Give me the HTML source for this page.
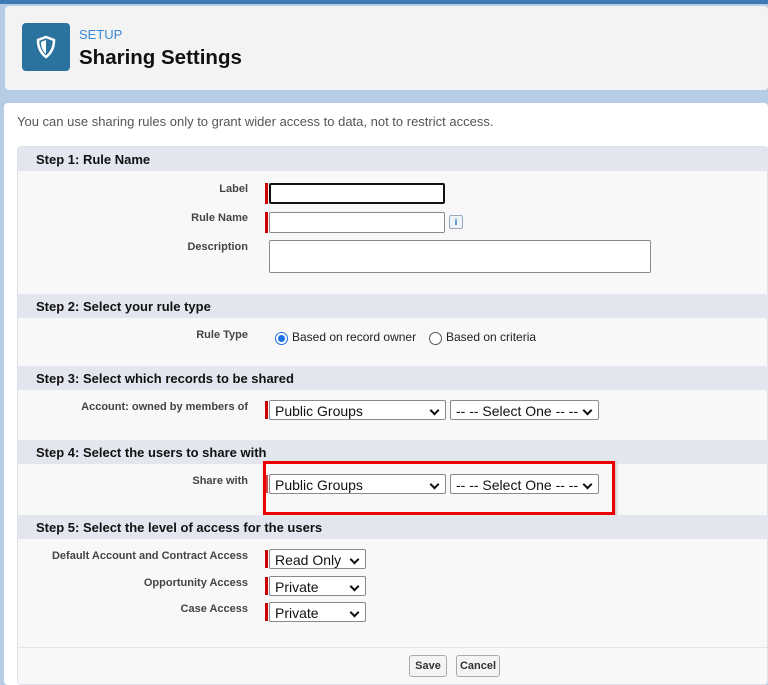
<!DOCTYPE html>
<html><head><style>
*{margin:0;padding:0;box-sizing:border-box}
body{width:768px;height:685px;overflow:hidden;background:#b7cde6;font-family:"Liberation Sans",sans-serif;position:relative}
.a{position:absolute}
.top{left:0;top:0;width:768px;height:4px;background:#3f79b5}
.hdr{left:5px;top:6px;width:763px;height:84px;background:#f3f3f3;border-radius:4px}
.icon{left:22px;top:23px;width:48px;height:48px;background:#2a739e;border-radius:4px}
.card{left:4px;top:103px;width:764px;height:582px;background:#fff;border-radius:4px}
.form{left:17px;top:146px;width:751px;height:539px;background:#f8f8f8;border:1px solid #dde0e6;border-radius:4px}
.sec{left:18px;width:750px;height:24px;background:#e3e6ef;font-size:13px;font-weight:bold;color:#111;padding:5px 0 0 18px}
.lbl{font-size:11px;font-weight:bold;color:#444;text-align:right;width:230px;left:18px}
.req{width:3px;background:#c00;}
.inp{background:#fff;border:1px solid #8a8a8a;border-radius:2px}
.sel{background:#fff;border:1px solid #8a8a8a;border-radius:2px;font-size:14px;color:#111;padding:2px 0 0 5px}
.sel:after{content:"";position:absolute;right:7px;top:6px;width:5px;height:5px;border-right:2px solid #111;border-bottom:2px solid #111;transform:rotate(45deg)}
.btn{background:#f4f4f4;border:1px solid #aaa;border-radius:3px;font-size:11px;font-weight:bold;color:#333;text-align:center;padding-top:4px;height:22px}
</style></head><body>
<div class="a top"></div>
<div class="a hdr"></div>
<div class="a icon"><svg width="48" height="48"><path d="M24 14 L32 17 Q32 28 24 34 Q16 28 16 17 Z" fill="none" stroke="#fff" stroke-width="2.5"/><path d="M24 17 L24 31 Q19 27 19 19 Z" fill="#fff"/></svg></div>
<div class="a" style="left:79px;top:27px;font-size:13px;color:#3a8ad6">SETUP</div>
<div class="a" style="left:79px;top:46px;font-size:20.5px;font-weight:bold;color:#111">Sharing Settings</div>
<div class="a card"></div>
<div class="a" style="left:17px;top:114px;font-size:13px;color:#555">You can use sharing rules only to grant wider access to data, not to restrict access.</div>
<div class="a form"></div>
<div class="a sec" style="top:147px">Step 1: Rule Name</div>
<div class="a lbl" style="top:183px">Label</div>
<div class="a req" style="left:265px;top:183px;height:21px"></div>
<div class="a inp" style="left:269px;top:183px;width:176px;height:21px;border:2px solid #111"></div>
<div class="a lbl" style="top:212px">Rule Name</div>
<div class="a req" style="left:265px;top:212px;height:21px"></div>
<div class="a inp" style="left:269px;top:212px;width:176px;height:21px"></div>
<div class="a" style="left:449px;top:215px;width:14px;height:14px;border:1px solid #9ab;background:#eef3fa;border-radius:2px;font-size:9px;font-weight:bold;color:#26a;text-align:center;line-height:12px">i</div>
<div class="a lbl" style="top:241px">Description</div>
<div class="a inp" style="left:269px;top:240px;width:382px;height:33px"></div>
<div class="a sec" style="top:294px">Step 2: Select your rule type</div>
<div class="a lbl" style="top:329px">Rule Type</div>
<div class="a" style="left:275px;top:332px;width:13px;height:13px;border-radius:50%;border:1px solid #1a73e8;background:#fff"><div style="margin:2px;width:7px;height:7px;border-radius:50%;background:#1a73e8"></div></div>
<div class="a" style="left:292px;top:330px;font-size:12px;color:#222">Based on record owner</div>
<div class="a" style="left:429px;top:332px;width:13px;height:13px;border-radius:50%;border:1px solid #555;background:#fff"></div>
<div class="a" style="left:446px;top:330px;font-size:12px;color:#222">Based on criteria</div>
<div class="a sec" style="top:366px">Step 3: Select which records to be shared</div>
<div class="a lbl" style="top:401px">Account: owned by members of</div>
<div class="a req" style="left:265px;top:401px;height:18px"></div>
<div class="a sel" style="left:269px;top:400px;width:177px;height:20px">Public Groups</div>
<div class="a sel" style="left:450px;top:400px;width:149px;height:20px">-- -- Select One -- --</div>
<div class="a sec" style="top:440px">Step 4: Select the users to share with</div>
<div class="a lbl" style="top:475px">Share with</div>
<div class="a req" style="left:265px;top:475px;height:18px;background:#c44"></div>
<div class="a sel" style="left:269px;top:474px;width:177px;height:20px">Public Groups</div>
<div class="a sel" style="left:450px;top:474px;width:149px;height:20px">-- -- Select One -- --</div>
<div class="a" style="left:263px;top:461px;width:352px;height:54px;border:3px solid #e00;box-shadow:1px 2px 3px rgba(0,0,0,.3)"></div>
<div class="a sec" style="top:515px">Step 5: Select the level of access for the users</div>
<div class="a lbl" style="top:550px">Default Account and Contract Access</div>
<div class="a req" style="left:265px;top:550px;height:18px"></div>
<div class="a sel" style="left:269px;top:549px;width:97px;height:20px">Read Only</div>
<div class="a lbl" style="top:577px">Opportunity Access</div>
<div class="a req" style="left:265px;top:577px;height:18px"></div>
<div class="a sel" style="left:269px;top:576px;width:97px;height:20px">Private</div>
<div class="a lbl" style="top:603px">Case Access</div>
<div class="a req" style="left:265px;top:603px;height:18px"></div>
<div class="a sel" style="left:269px;top:602px;width:97px;height:20px">Private</div>
<div class="a" style="left:18px;top:647px;width:750px;height:1px;background:#e4e4e4"></div>
<div class="a btn" style="left:409px;top:655px;width:38px">Save</div>
<div class="a btn" style="left:456px;top:655px;width:44px">Cancel</div>
</body></html>
